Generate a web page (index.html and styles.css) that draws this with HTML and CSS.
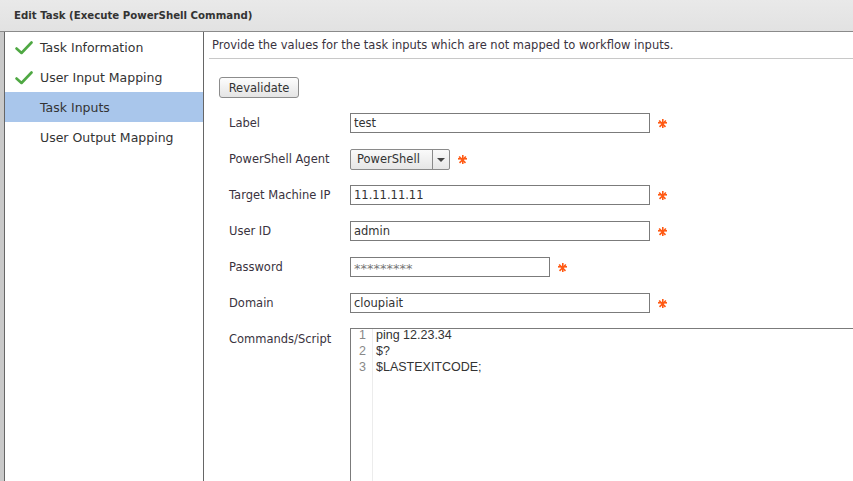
FILE: index.html
```html
<!DOCTYPE html>
<html lang="en">

<head>
    <meta charset="UTF-8">
    <title>Edit Task (Execute PowerShell Command)</title>
    <link rel="stylesheet" href="styles.css">
</head>

<body>
    <div class="dialog-title">Edit Task (Execute PowerShell Command)</div>

    <div class="dialog-body">
        <div class="backdrop-strip"></div>

        <ul class="wizard-nav">
            <li class="nav-item done">
                <svg class="check" width="18" height="14" viewBox="0 0 18 14">
                    <path d="M1.5 7.5 L6.5 12 L16.5 1.5" fill="none" stroke="#4fa843" stroke-width="2.6" stroke-linecap="round" stroke-linejoin="round"/>
                </svg>
                Task Information
            </li>
            <li class="nav-item done">
                <svg class="check" width="18" height="14" viewBox="0 0 18 14">
                    <path d="M1.5 7.5 L6.5 12 L16.5 1.5" fill="none" stroke="#4fa843" stroke-width="2.6" stroke-linecap="round" stroke-linejoin="round"/>
                </svg>
                User Input Mapping
            </li>
            <li class="nav-item active">Task Inputs</li>
            <li class="nav-item">User Output Mapping</li>
        </ul>

        <div class="content">
            <div class="description">Provide the values for the task inputs which are not mapped to workflow inputs.</div>

            <div class="form-area">
                <button class="btn">Revalidate</button>

                <div class="form-row">
                    <label>Label</label>
                    <div class="field"><input type="text" value="test"></div>
                    <span class="required"></span>
                </div>

                <div class="form-row">
                    <label>PowerShell Agent</label>
                    <div class="combo">
                        <span class="combo-value">PowerShell</span>
                        <span class="combo-arrow"></span>
                    </div>
                    <span class="required"></span>
                </div>

                <div class="form-row">
                    <label>Target Machine IP</label>
                    <div class="field"><input type="text" value="11.11.11.11"></div>
                    <span class="required"></span>
                </div>

                <div class="form-row">
                    <label>User ID</label>
                    <div class="field"><input type="text" value="admin"></div>
                    <span class="required"></span>
                </div>

                <div class="form-row">
                    <label>Password</label>
                    <div class="field short"><input type="text" class="masked" value="*********"></div>
                    <span class="required"></span>
                </div>

                <div class="form-row">
                    <label>Domain</label>
                    <div class="field"><input type="text" value="cloupiait"></div>
                    <span class="required"></span>
                </div>

                <div class="form-row script-row">
                    <label>Commands/Script</label>
                    <div class="editor">
                        <div class="gutter">
                            <div>1</div>
                            <div>2</div>
                            <div>3</div>
                        </div>
                        <div class="code">
                            <div>ping 12.23.34</div>
                            <div>$?</div>
                            <div>$LASTEXITCODE;</div>
                        </div>
                    </div>
                </div>
            </div>
        </div>
    </div>
</body>

</html>
```

FILE: styles.css
```css
* {
    margin: 0;
    padding: 0;
    box-sizing: border-box;
}

html,
body {
    height: 100%;
    overflow: hidden;
}

body {
    font-family: 'DejaVu Sans', Verdana, sans-serif;
    font-size: 11.5px;
    color: #333;
    background: #fff;
    display: flex;
    flex-direction: column;
}

.dialog-title {
    height: 32px;
    line-height: 31px;
    padding-left: 14px;
    background: linear-gradient(#e9e9e9, #e2e2e2);
    border-bottom: 1px solid #8a8a8a;
    font-weight: bold;
    font-size: 10.2px;
    color: #333;
}

.dialog-body {
    flex: 1;
    display: flex;
    min-height: 0;
}

.backdrop-strip {
    width: 4px;
    background: #c9c9c9;
}

/* Wizard steps */
.wizard-nav {
    list-style: none;
    width: 200px;
    border-left: 1px solid #666;
    border-right: 1px solid #666;
    background: #fff;
}

.nav-item {
    height: 30px;
    display: flex;
    align-items: center;
    padding-left: 35px;
    font-size: 12.5px;
    color: #333;
    position: relative;
}

.nav-item .check {
    position: absolute;
    left: 10px;
    top: 9px;
}

.nav-item.active {
    background: #a9c6eb;
}

/* Right side */
.content {
    flex: 1;
    display: flex;
    flex-direction: column;
    padding-left: 5px;
    min-width: 0;
    overflow: hidden;
}

.description {
    height: 27px;
    line-height: 27px;
    padding-left: 3px;
    border-bottom: 1px solid #c8c8c8;
    color: #3a3340;
    white-space: nowrap;
}

.form-area {
    flex: 1;
    padding: 18px 0 0 10px;
    display: flex;
    flex-direction: column;
    gap: 16px;
    min-height: 0;
}

.btn {
    align-self: flex-start;
    width: 80px;
    height: 21px;
    font-family: inherit;
    font-size: 11.5px;
    color: #333;
    background: linear-gradient(#fdfdfd, #e4e4e4);
    border: 1px solid #8c8c8c;
    border-radius: 3px;
    margin-bottom: -1px;
}

.form-row {
    display: flex;
    align-items: center;
    height: 20px;
}

.form-row label {
    width: 131px;
    flex-shrink: 0;
    padding-left: 10px;
    color: #3a3340;
}

.field {
    width: 300px;
    height: 20px;
}

.field.short {
    width: 200px;
}

.field input {
    width: 100%;
    height: 100%;
    border: 1px solid #7b7b7b;
    padding: 0 3px;
    font-family: inherit;
    font-size: 11.5px;
    color: #333;
    outline: none;
}

.field input.masked {
    color: #777;
    font-size: 13px;
    padding-top: 3px;
}

.required {
    width: 9px;
    height: 9px;
    margin-left: 8px;
    background:
        linear-gradient(#ff5a14, #ff5a14) center / 1.6px 9px no-repeat,
        linear-gradient(#ff5a14, #ff5a14) center / 9px 1.6px no-repeat;
    position: relative;
}

.required::after {
    content: '';
    position: absolute;
    left: 0;
    top: 0;
    width: 9px;
    height: 9px;
    background:
        linear-gradient(#ff5a14, #ff5a14) center / 1.6px 9px no-repeat,
        linear-gradient(#ff5a14, #ff5a14) center / 9px 1.6px no-repeat;
    transform: rotate(45deg);
}

/* Combo box */
.combo {
    width: 100px;
    height: 21px;
    display: flex;
    border: 1px solid #8a8a8a;
    border-radius: 2px;
    background: linear-gradient(#fafafa, #e6e6e6);
}

.combo-value {
    flex: 1;
    line-height: 19px;
    padding-left: 6px;
    color: #333;
}

.combo-arrow {
    width: 17px;
    border-left: 1px solid #8a8a8a;
    position: relative;
}

.combo-arrow::after {
    content: '';
    position: absolute;
    left: 4px;
    top: 8px;
    border-left: 4px solid transparent;
    border-right: 4px solid transparent;
    border-top: 4px solid #444;
}

/* Script editor */
.script-row {
    flex: 1;
    align-items: stretch;
    height: auto;
    margin-top: -1px;
}

.script-row label {
    line-height: 22px;
}

.editor {
    flex: 1;
    border: 1px solid #7b7b7b;
    border-right: none;
    border-bottom: none;
    display: flex;
    font-family: 'Liberation Sans', Arial, sans-serif;
    font-size: 12.5px;
    line-height: 16px;
}

.gutter {
    width: 22px;
    text-align: right;
    padding-right: 6px;
    color: #888;
    border-right: 1px solid #ececec;
}

.gutter div,
.code div {
    position: relative;
    top: -2px;
}

.code {
    padding-left: 3px;
    color: #333;
}
```
